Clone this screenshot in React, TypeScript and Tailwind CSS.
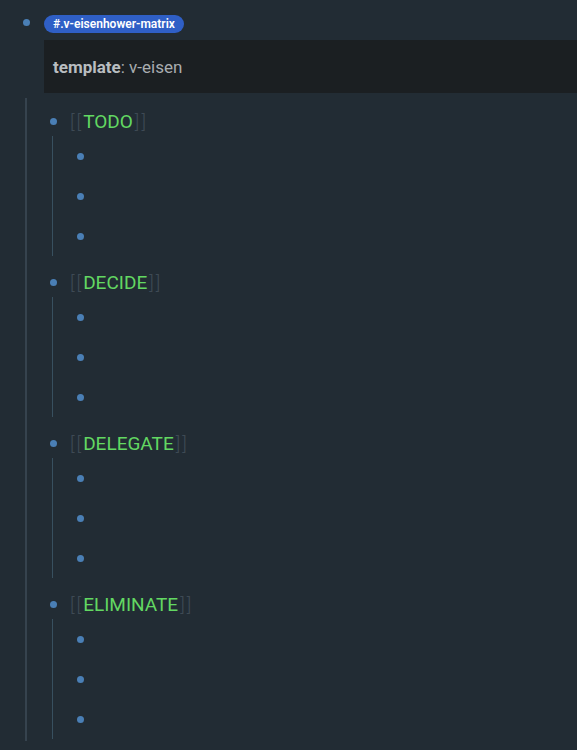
const groups = ["TODO", "DECIDE", "DELEGATE", "ELIMINATE"];

// Bullet: small blue dot used for every outline row
function Bullet() {
  return <span className="block h-[7px] w-[7px] rounded-full bg-[#4a7fb5]" />;
}

export default function App() {
  return (
    <div className="min-h-[750px] bg-[#222c34] font-['Roboto',sans-serif]">
      {/* Top block with tag and properties */}
      <div className="flex pt-[15px]">
        <div className="w-[44px] shrink-0 pl-[23px] pt-[4px]">
          <Bullet />
        </div>
        <div className="flex-1">
          <div className="flex h-[18px]">
            <span className="flex items-center rounded-full bg-[#2f5fc6] px-[9px] text-[12px] font-semibold text-white">
              #.v-eisenhower-matrix
            </span>
          </div>
          <div className="mt-[7px] flex h-[53px] items-center bg-[#1b1f22] pl-[9px] pt-[3px] text-[17px] text-[#a9adb0]">
            <span className="font-bold text-[#b9bdc0]">template</span>
            <span>: v-eisen</span>
          </div>
        </div>
      </div>

      {/* Children */}
      <div className="ml-[25px] mt-[5px] border-l-2 border-[#36434e] pb-[2px] pt-[8px]">
        {groups.map((g, i) => (
          <div key={g} className={i > 0 ? "mt-[11px]" : ""}>
            <div className="flex h-[30px] items-center">
              <span className="ml-[23px]">
                <Bullet />
              </span>
              <span className="ml-[13px] text-[19px] font-light leading-none">
                <span className="tracking-[2px] text-[#3e4a54]">[[</span>
                <span className="font-normal text-[#62d862]">{g}</span>
                <span className="ml-[2px] tracking-[2px] text-[#3e4a54]">]]</span>
              </span>
            </div>
            <div className="ml-[25px] border-l border-[#38505f]">
              {[0, 1, 2].map((n) => (
                <div key={n} className="flex h-[40px] items-center pl-[24px]">
                  <Bullet />
                </div>
              ))}
            </div>
          </div>
        ))}
      </div>
    </div>
  );
}
